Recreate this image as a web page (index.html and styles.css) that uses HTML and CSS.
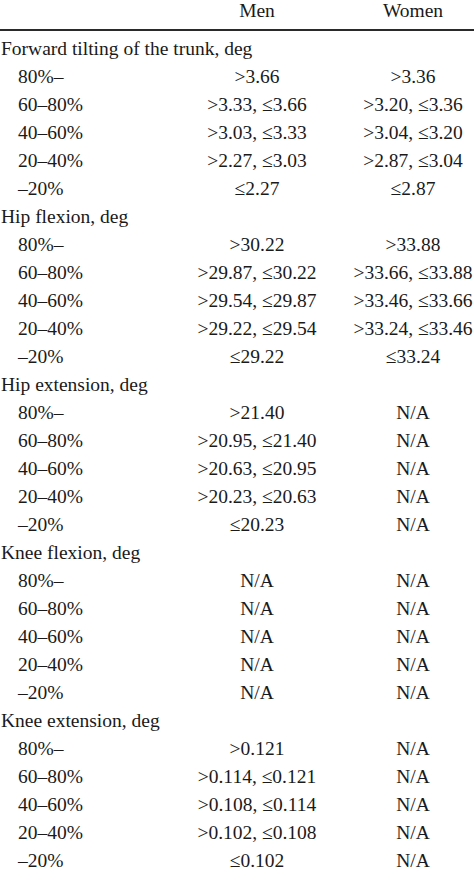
FILE: index.html
```html
<!DOCTYPE html>
<html lang="en">
<head>
<meta charset="utf-8">
<title>Table</title>
<link rel="stylesheet" href="styles.css">
</head>
<body>
<div class="sheet">
  <div class="head">
    <span></span><span class="hc">Men</span><span class="hc">Women</span>
  </div>
  <svg class="rule" width="474" height="2" viewBox="0 0 474 2" aria-hidden="true"><rect x="0" y="0" width="474" height="2" fill="#2a2a2a"/></svg>
  <div class="body">
    <div class="sec">Forward tilting of the trunk, deg</div>
    <div class="row"><span class="lab">80%–</span><span>&gt;3.66</span><span>&gt;3.36</span></div>
    <div class="row"><span class="lab">60–80%</span><span>&gt;3.33, ≤3.66</span><span>&gt;3.20, ≤3.36</span></div>
    <div class="row"><span class="lab">40–60%</span><span>&gt;3.03, ≤3.33</span><span>&gt;3.04, ≤3.20</span></div>
    <div class="row"><span class="lab">20–40%</span><span>&gt;2.27, ≤3.03</span><span>&gt;2.87, ≤3.04</span></div>
    <div class="row"><span class="lab">–20%</span><span>≤2.27</span><span>≤2.87</span></div>

    <div class="sec">Hip flexion, deg</div>
    <div class="row"><span class="lab">80%–</span><span>&gt;30.22</span><span>&gt;33.88</span></div>
    <div class="row"><span class="lab">60–80%</span><span>&gt;29.87, ≤30.22</span><span>&gt;33.66, ≤33.88</span></div>
    <div class="row"><span class="lab">40–60%</span><span>&gt;29.54, ≤29.87</span><span>&gt;33.46, ≤33.66</span></div>
    <div class="row"><span class="lab">20–40%</span><span>&gt;29.22, ≤29.54</span><span>&gt;33.24, ≤33.46</span></div>
    <div class="row"><span class="lab">–20%</span><span>≤29.22</span><span>≤33.24</span></div>

    <div class="sec">Hip extension, deg</div>
    <div class="row"><span class="lab">80%–</span><span>&gt;21.40</span><span>N/A</span></div>
    <div class="row"><span class="lab">60–80%</span><span>&gt;20.95, ≤21.40</span><span>N/A</span></div>
    <div class="row"><span class="lab">40–60%</span><span>&gt;20.63, ≤20.95</span><span>N/A</span></div>
    <div class="row"><span class="lab">20–40%</span><span>&gt;20.23, ≤20.63</span><span>N/A</span></div>
    <div class="row"><span class="lab">–20%</span><span>≤20.23</span><span>N/A</span></div>

    <div class="sec">Knee flexion, deg</div>
    <div class="row"><span class="lab">80%–</span><span>N/A</span><span>N/A</span></div>
    <div class="row"><span class="lab">60–80%</span><span>N/A</span><span>N/A</span></div>
    <div class="row"><span class="lab">40–60%</span><span>N/A</span><span>N/A</span></div>
    <div class="row"><span class="lab">20–40%</span><span>N/A</span><span>N/A</span></div>
    <div class="row"><span class="lab">–20%</span><span>N/A</span><span>N/A</span></div>

    <div class="sec">Knee extension, deg</div>
    <div class="row"><span class="lab">80%–</span><span>&gt;0.121</span><span>N/A</span></div>
    <div class="row"><span class="lab">60–80%</span><span>&gt;0.114, ≤0.121</span><span>N/A</span></div>
    <div class="row"><span class="lab">40–60%</span><span>&gt;0.108, ≤0.114</span><span>N/A</span></div>
    <div class="row"><span class="lab">20–40%</span><span>&gt;0.102, ≤0.108</span><span>N/A</span></div>
    <div class="row"><span class="lab">–20%</span><span>≤0.102</span><span>N/A</span></div>
  </div>
</div>
</body>
</html>
```

FILE: styles.css
```css
html, body {
  margin: 0;
  padding: 0;
  background: #ffffff;
  overflow: hidden;
}

body {
  width: 474px;
  font-family: "Liberation Serif", "Times New Roman", serif;
  font-size: 19.5px;
  color: #1a1a1a;
}

.sheet {
  width: 490px;
}

.head,
.row {
  display: grid;
  grid-template-columns: 178px 158px 154px;
  white-space: nowrap;
}

.head {
  line-height: 22px;
  height: 22px;
  padding-bottom: 7px;
}

.head span,
.row span {
  text-align: center;
}

.rule {
  display: block;
  width: 474px;
  height: 2px;
  background: #2a2a2a;
}

.body {
  padding-top: 4px;
}

.sec,
.row {
  line-height: 28px;
  height: 28px;
  white-space: nowrap;
}

.sec {
  padding-left: 1px;
}

.row span.lab {
  text-align: left;
  padding-left: 18px;
}
```
